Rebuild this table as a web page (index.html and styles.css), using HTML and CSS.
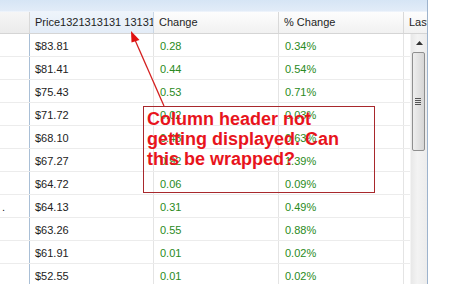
FILE: index.html
```html
<!DOCTYPE html>
<html>
<head>
<meta charset="utf-8">
<link rel="stylesheet" href="styles.css">
</head>
<body>
<div class="page">
  <div class="window">
    <div class="topbar"></div>
    <div class="header">
      <div class="hcell hfirst"></div>
      <div class="hcell hprice">Price1321313131 131313131</div>
      <div class="hcell">Change</div>
      <div class="hcell">% Change</div>
      <div class="hcell hlast">Last Updated</div>
    </div>
    <div class="body">
      <div class="rows">
        <div class="row"><div class="cell c1"></div><div class="cell c2">$83.81</div><div class="cell c3">0.28</div><div class="cell c4">0.34%</div><div class="cell c5"></div></div>
        <div class="row"><div class="cell c1"></div><div class="cell c2">$81.41</div><div class="cell c3">0.44</div><div class="cell c4">0.54%</div><div class="cell c5"></div></div>
        <div class="row"><div class="cell c1"></div><div class="cell c2">$75.43</div><div class="cell c3">0.53</div><div class="cell c4">0.71%</div><div class="cell c5"></div></div>
        <div class="row"><div class="cell c1"></div><div class="cell c2">$71.72</div><div class="cell c3">0.02</div><div class="cell c4">0.03%</div><div class="cell c5"></div></div>
        <div class="row"><div class="cell c1"></div><div class="cell c2">$68.10</div><div class="cell c3">0.43</div><div class="cell c4">0.63%</div><div class="cell c5"></div></div>
        <div class="row"><div class="cell c1"></div><div class="cell c2">$67.27</div><div class="cell c3">0.92</div><div class="cell c4">1.39%</div><div class="cell c5"></div></div>
        <div class="row"><div class="cell c1"></div><div class="cell c2">$64.72</div><div class="cell c3">0.06</div><div class="cell c4">0.09%</div><div class="cell c5"></div></div>
        <div class="row"><div class="cell c1 dot">.</div><div class="cell c2">$64.13</div><div class="cell c3">0.31</div><div class="cell c4">0.49%</div><div class="cell c5"></div></div>
        <div class="row"><div class="cell c1"></div><div class="cell c2">$63.26</div><div class="cell c3">0.55</div><div class="cell c4">0.88%</div><div class="cell c5"></div></div>
        <div class="row"><div class="cell c1"></div><div class="cell c2">$61.91</div><div class="cell c3">0.01</div><div class="cell c4">0.02%</div><div class="cell c5"></div></div>
        <div class="row"><div class="cell c1"></div><div class="cell c2">$52.55</div><div class="cell c3">0.01</div><div class="cell c4">0.02%</div><div class="cell c5"></div></div>
      </div>
      <div class="scrollbar">
        <div class="sb-arrow">
          <svg width="7" height="4" viewBox="0 0 7 4"><path d="M0 4 L3.5 0 L7 4 Z" fill="#333"/></svg>
        </div>
        <div class="sb-thumb">
          <div class="grip"></div><div class="grip"></div><div class="grip"></div><div class="grip"></div>
        </div>
      </div>
    </div>
  </div>

  <svg class="arrow" width="465" height="284" viewBox="0 0 465 284">
    <line x1="164" y1="106" x2="135" y2="40" stroke="#d42020" stroke-width="1.3"/>
    <path d="M131 31 L139.5 40 L131.5 42.5 Z" fill="#e01010"/>
  </svg>
  <div class="note">Column header not<br>getting displayed. Can<br>this be wrapped?</div>
</div>
</body>
</html>
```
FILE: styles.css
```css
html, body {
  margin: 0;
  padding: 0;
  background: #ffffff;
}
.page {
  position: relative;
  width: 465px;
  height: 284px;
  overflow: hidden;
  font-family: "Liberation Sans", Arial, sans-serif;
  font-size: 11px;
}
.window {
  width: 427px;
  height: 284px;
  border-right: 1px solid #9db3cd;
  display: flex;
  flex-direction: column;
  background: #fff;
}
.topbar {
  height: 11px;
  background: linear-gradient(#d6e5f5, #e2ecf8);
  border-bottom: 1px solid #edf3fb;
  flex: none;
}
.header {
  display: grid;
  grid-template-columns: 30px 124px 125px 125px 1fr;
  height: 21px;
  border-bottom: 1px solid #d5d5d5;
  flex: none;
}
.hcell {
  border-right: 1px solid #d9d9d9;
  padding-left: 5px;
  line-height: 21px;
  color: #1e1e1e;
  white-space: nowrap;
  overflow: hidden;
  background: linear-gradient(#fdfdfd, #f1f1f1);
}
.hfirst {
  background: linear-gradient(#f6f6f6, #ebebeb);
}
.hprice {
  background: linear-gradient(#eef4fb, #e3ecf7);
  border-right-color: #c9d6e4;
}
.hlast {
  border-right: none;
}
.body {
  flex: 1;
  display: flex;
  min-height: 0;
}
.rows {
  flex: 1;
  overflow: hidden;
}
.row {
  display: grid;
  grid-template-columns: 30px 124px 125px 125px 1fr;
  height: 22px;
  border-bottom: 1px solid #ececec;
}
.cell {
  border-right: 1px solid #e4e4e4;
  padding-left: 5px;
  padding-top: 2px;
  line-height: 21px;
  white-space: nowrap;
  overflow: hidden;
  color: #222;
}
.c1 {
  border-right-color: #a9bfd6;
}
.dot {
  padding-left: 2px;
}
.c3, .c4 {
  color: #2a8a22;
  padding-left: 6px;
}
.c5 {
  border-right: none;
}
.scrollbar {
  width: 16px;
  flex: none;
  background: linear-gradient(90deg, #e8e8e8, #f3f3f3 40%, #ececec);
  border-left: 1px solid #f4f4f4;
  display: flex;
  flex-direction: column;
  align-items: center;
}
.sb-arrow {
  height: 18px;
  display: flex;
  align-items: center;
  justify-content: center;
  padding-top: 0;
}
.sb-thumb {
  width: 13px;
  height: 99px;
  box-sizing: border-box;
  border: 1px solid #8f8f8f;
  border-radius: 2px;
  background: linear-gradient(90deg, #eeeeee, #e2e2e2 50%, #d6d6d6);
  display: flex;
  flex-direction: column;
  align-items: center;
  justify-content: center;
  gap: 1px;
  margin-left: -2px;
}
.grip {
  width: 6px;
  height: 1px;
  background: #555;
}
.arrow {
  position: absolute;
  left: 0;
  top: 0;
}
.note {
  position: absolute;
  left: 143px;
  top: 106px;
  width: 224px;
  height: 81px;
  border: 1px solid #a8282c;
  padding: 2px 3px;
  font-family: "Liberation Sans", Arial, sans-serif;
  font-weight: bold;
  font-size: 18px;
  line-height: 20px;
  color: #e8141c;
  white-space: nowrap;
}
```
